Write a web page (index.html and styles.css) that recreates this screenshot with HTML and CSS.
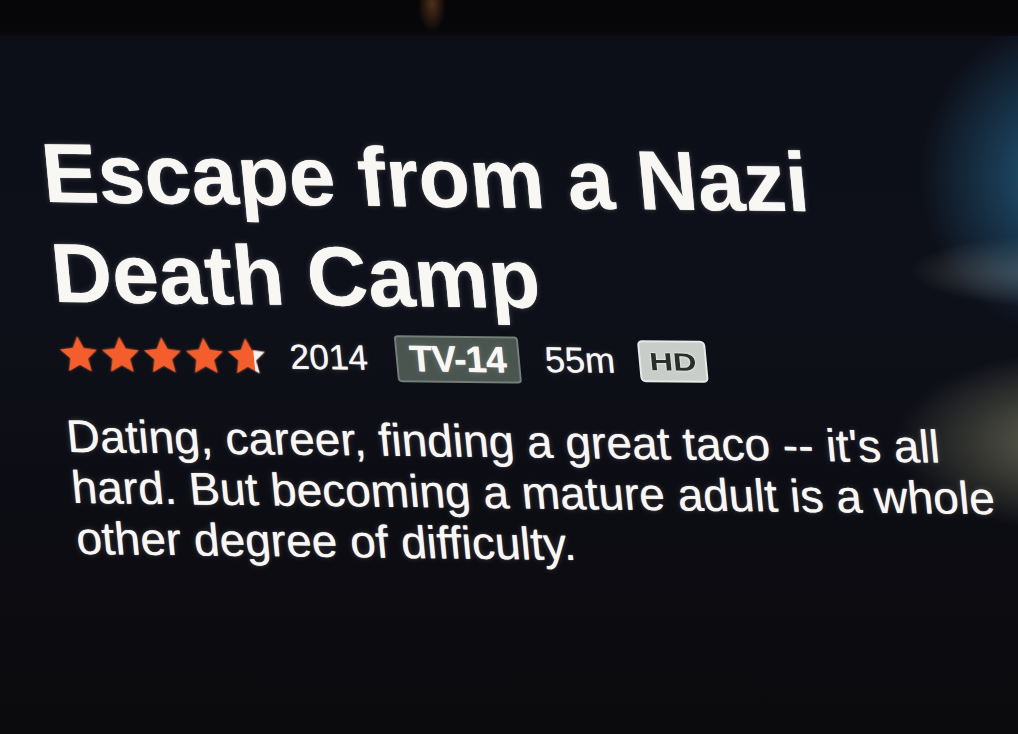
FILE: index.html
```html
<!DOCTYPE html>
<html lang="en">
<head>
<meta charset="utf-8">
<title>Escape from a Nazi Death Camp</title>
<link rel="stylesheet" href="styles.css">
</head>
<body>
<div class="bezel"></div>
<main class="screen">
  <section class="info">
    <h1 class="title">
      <span class="line">Escape from a Nazi</span>
      <span class="line">Death Camp</span>
    </h1>
    <div class="meta">
      <div class="stars" aria-label="Rating 4.7 of 5">
        <svg class="star" viewBox="0 0 24 24"><path d="M12 1.2L15.29 8.27 23.03 9.22 17.33 14.53 18.82 22.18 12 18.4 5.18 22.18 6.67 14.53 0.97 9.22 8.71 8.27z"/></svg>
        <svg class="star" viewBox="0 0 24 24"><path d="M12 1.2L15.29 8.27 23.03 9.22 17.33 14.53 18.82 22.18 12 18.4 5.18 22.18 6.67 14.53 0.97 9.22 8.71 8.27z"/></svg>
        <svg class="star" viewBox="0 0 24 24"><path d="M12 1.2L15.29 8.27 23.03 9.22 17.33 14.53 18.82 22.18 12 18.4 5.18 22.18 6.67 14.53 0.97 9.22 8.71 8.27z"/></svg>
        <svg class="star" viewBox="0 0 24 24"><path d="M12 1.2L15.29 8.27 23.03 9.22 17.33 14.53 18.82 22.18 12 18.4 5.18 22.18 6.67 14.53 0.97 9.22 8.71 8.27z"/></svg>
        <svg class="star" viewBox="0 0 24 24">
          <defs>
            <linearGradient id="partial" x1="0" y1="0" x2="1" y2="0">
              <stop offset="0.7" stop-color="#f45e2c"/>
              <stop offset="0.7" stop-color="#f4f2ee"/>
            </linearGradient>
          </defs>
          <path fill="url(#partial)" d="M12 1.2L15.29 8.27 23.03 9.22 17.33 14.53 18.82 22.18 12 18.4 5.18 22.18 6.67 14.53 0.97 9.22 8.71 8.27z"/>
        </svg>
      </div>
      <span class="year">2014</span>
      <span class="rating">TV-14</span>
      <span class="duration">55m</span>
      <span class="hd"><span class="hd-text">HD</span></span>
    </div>
    <p class="synopsis">
      <span class="line">Dating, career, finding a great taco -- it's all</span>
      <span class="line">hard. But becoming a mature adult is a whole</span>
      <span class="line">other degree of difficulty.</span>
    </p>
  </section>
</main>
</body>
</html>
```

FILE: styles.css
```css
html, body {
  margin: 0;
  padding: 0;
}

body {
  width: 1018px;
  height: 734px;
  overflow: hidden;
  background: #0b0a0d;
  font-family: "Liberation Sans", Arial, sans-serif;
  color: #f8f7f3;
}

.bezel {
  height: 36px;
  background:
    radial-gradient(ellipse 14px 28px at 432px 4px, rgba(150, 88, 40, 0.5), rgba(150, 88, 40, 0) 100%),
    linear-gradient(180deg, #060607 0%, #07070a 85%, #0a0b10 100%);
}

.screen {
  height: 698px;
  box-sizing: border-box;
  padding: 87px 0 0 37px;
  background:
    radial-gradient(ellipse 150px 160px at 1070px 140px, rgba(38, 104, 140, 1), rgba(32, 82, 114, 0.65) 45%, rgba(20, 40, 60, 0) 100%),
    radial-gradient(ellipse 140px 36px at 1050px 235px, rgba(125, 130, 130, 0.65), rgba(110, 115, 115, 0) 100%),
    radial-gradient(ellipse 180px 90px at 1075px 405px, rgba(118, 120, 96, 0.85), rgba(100, 100, 80, 0) 100%),
    linear-gradient(180deg, #0d0f18 0%, #0e1019 40%, #0c0c12 75%, #0b0a0c 100%);
}

.info {
  transform-origin: 0 0;
  transform: skew(5.4deg, 0.7deg);
  text-shadow: 0 0 1px rgba(255, 255, 255, 0.85), 0 0 6px rgba(255, 255, 255, 0.18);
}

.title {
  margin: 0;
  font-size: 84px;
  font-weight: 700;
  line-height: 100px;
  letter-spacing: -0.2px;
}

.line {
  display: block;
  white-space: nowrap;
}

.meta {
  display: flex;
  align-items: center;
  height: 46px;
  margin-top: 8px;
}

.stars {
  display: flex;
  gap: 2px;
  margin-right: 23px;
}

.star {
  width: 40px;
  height: 40px;
  fill: #f45e2c;
  filter: drop-shadow(0 0 1px rgba(255, 110, 60, 0.6));
}

.year,
.duration {
  font-size: 35px;
  line-height: 46px;
}

.year {
  margin-right: 28px;
}

.rating {
  box-sizing: border-box;
  height: 47px;
  padding: 0 12px;
  border: 2px solid #737e78;
  border-radius: 4px;
  background: #4a5550;
  font-size: 37px;
  font-weight: 700;
  line-height: 43px;
  letter-spacing: -0.5px;
  margin-right: 25px;
}

.duration {
  font-size: 36px;
  margin-right: 24px;
}

.hd {
  box-sizing: border-box;
  display: flex;
  align-items: center;
  justify-content: center;
  width: 68px;
  height: 42px;
  border: 2px solid #e6e9e6;
  border-radius: 5px;
  background: #c9cdc9;
}

.hd-text {
  display: inline-block;
  color: #2b2e2d;
  font-size: 25px;
  font-weight: 700;
  line-height: 1;
  transform: scaleX(1.3);
  text-shadow: 0 0 1px #ffffff, 0 0 2px #ffffff;
}

.synopsis {
  margin: 34px 0 0 0;
  font-size: 46px;
  line-height: 51px;
}
```
